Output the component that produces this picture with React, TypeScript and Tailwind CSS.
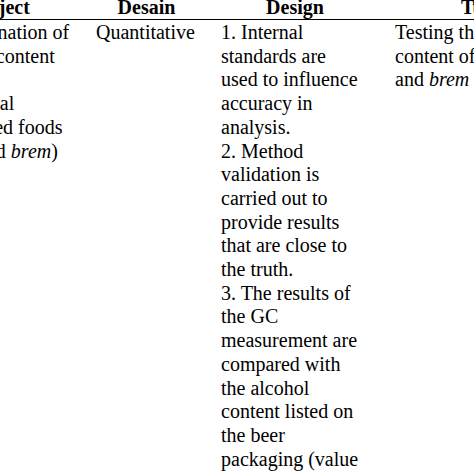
import type { ReactNode } from "react";

const serif = { fontFamily: '"Liberation Serif", "Times New Roman", serif' };

type Line = ReactNode;

const object: Line[] = [
  "Determination of",
  "alcohol content",
  "in beer",
  "traditional",
  "fermented foods",
  <>
    (tape and <i>brem</i>)
  </>,
];

const desain: Line[] = ["Quantitative"];

const design: Line[] = [
  "1. Internal",
  "standards are",
  "used to influence",
  "accuracy in",
  "analysis.",
  "2. Method",
  "validation is",
  "carried out to",
  "provide results",
  "that are close to",
  "the truth.",
  "3. The results of",
  "the GC",
  "measurement are",
  "compared with",
  "the alcohol",
  "content listed on",
  "the beer",
  "packaging (value",
];

const tujuan: Line[] = [
  "Testing the alcohol",
  "content of beer, tape",
  <>
    and <i>brem</i>
  </>,
];

function Cell({ lines, className }: { lines: Line[]; className: string }) {
  return (
    <div className={className}>
      {lines.map((l, i) => (
        <div key={i} className="whitespace-nowrap">
          {l}
        </div>
      ))}
    </div>
  );
}

export default function App() {
  return (
    <div className="w-[474px] h-[474px] overflow-hidden bg-white text-black" style={serif}>
      <div className="ml-[-75px] mt-[-4px] w-[700px] text-[20px] leading-[23.7px]">
        <div className="grid grid-cols-[165px_126px_172px_237px] h-[24px] border-b-[1.5px] border-black font-bold">
          <div className="text-center pr-[13px]">Object</div>
          <div className="text-center pr-[13px]">Desain</div>
          <div className="text-center pr-[14px]">Design</div>
          <div className="pl-[73px]">Tujuan</div>
        </div>
        <div className="grid grid-cols-[165px_126px_172px_237px] pt-[1px]">
          <Cell lines={object} className="pl-[7px]" />
          <Cell lines={desain} className="pl-[6px]" />
          <Cell lines={design} className="pl-[5px]" />
          <Cell lines={tujuan} className="pl-[7px]" />
        </div>
      </div>
    </div>
  );
}
